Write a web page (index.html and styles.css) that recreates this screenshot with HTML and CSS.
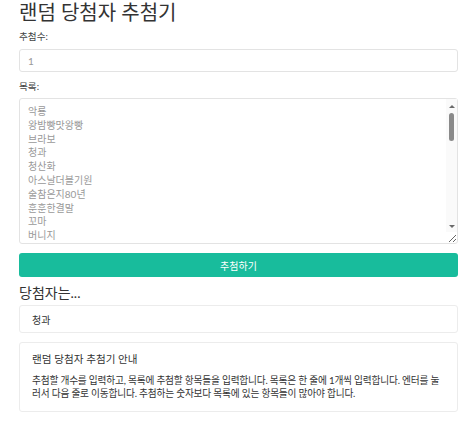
FILE: index.html
```html
<!DOCTYPE html>
<html lang="ko">
<head>
<meta charset="utf-8">
<link rel="stylesheet" href="styles.css">
</head>
<body>
<div class="page">
  <h1 class="title">랜덤 당첨자 추첨기</h1>
  <label class="label" for="count">추첨수:</label>
  <input class="field" id="count" type="text" placeholder="1">
  <label class="label label-list" for="list">목록:</label>
  <div class="area-wrap">
    <textarea class="field area" id="list">악룡
왕밤빵맛왕빵
브라보
청과
청산화
아스날더블기원
술참은지80년
훈훈한결말
꼬마
버니지
푸른
하늘
바다
노을
</textarea>
    <div class="scrollbar" aria-hidden="true">
      <span class="arrow arrow-up"></span>
      <span class="thumb"></span>
      <span class="arrow arrow-down"></span>
    </div>
  </div>
  <button class="btn" type="button">추첨하기</button>
  <h2 class="subtitle">당첨자는...</h2>
  <div class="result">청과</div>
  <div class="info">
    <h3 class="info-title">랜덤 당첨자 추첨기 안내</h3>
    <p class="info-text">추첨할 개수를 입력하고, 목록에 추첨할 항목들을 입력합니다. 목록은 한 줄에 1개씩 입력합니다. 엔터를 눌러서 다음 줄로 이동합니다. 추첨하는 숫자보다 목록에 있는 항목들이 많아야 합니다.</p>
  </div>
</div>
</body>
</html>
```
FILE: styles.css
```css
* { box-sizing: border-box; }
html, body { margin: 0; padding: 0; background: #fff; }
body {
  font-family: "Lato", "Noto Sans CJK KR", sans-serif;
  color: #2c3e50;
}
.page {
  padding: 0 16px 0 19px;
  display: flex;
  flex-direction: column;
}
.title {
  margin: 0;
  font-size: 20px;
  font-weight: 400;
  line-height: 24px;
  color: #333;
}
.label {
  margin-top: 6px;
  font-size: 9.6px;
  line-height: 14px;
  color: #444;
}
.label-list { margin-top: 8px; }
.field {
  margin-top: 5px;
  width: 100%;
  height: 23px;
  border: 1px solid #e3e3e3;
  border-radius: 3px;
  padding: 0 8px;
  font-family: "Lato", "Noto Sans CJK KR", sans-serif;
  font-size: 10px;
  color: #999;
  background: #fff;
  outline: none;
}
.field::placeholder { color: #999; }
.area-wrap {
  position: relative;
  margin-top: 4px;
}
.area {
  margin: 0;
  height: 146px;
  padding: 6px 8px 4px;
  line-height: 13.8px;
  resize: vertical;
  overflow: hidden;
  display: block;
}
.scrollbar {
  position: absolute;
  top: 1px;
  right: 1px;
  bottom: 12px;
  width: 11px;
  display: flex;
  flex-direction: column;
  align-items: center;
  background: #fafafa;
}
.arrow {
  width: 0;
  height: 0;
  border-left: 3px solid transparent;
  border-right: 3px solid transparent;
}
.arrow-up {
  margin-top: 6px;
  border-bottom: 3px solid #6a6a6a;
}
.arrow-down {
  margin-top: auto;
  margin-bottom: 4px;
  border-top: 3px solid #6a6a6a;
}
.thumb {
  margin-top: 5px;
  width: 5px;
  height: 28px;
  border-radius: 3px;
  background: #8a8a8a;
}
.btn {
  margin-top: 9px;
  height: 24px;
  border: 0;
  border-radius: 3px;
  background: #18bc9c;
  color: #fff;
  font-family: "Lato", "Noto Sans CJK KR", sans-serif;
  font-size: 10px;
}
.subtitle {
  margin: 6px 0 0;
  font-size: 14px;
  font-weight: 400;
  line-height: 20px;
  color: #333;
}
.result {
  margin-top: 2px;
  height: 28px;
  border: 1px solid #ececec;
  border-radius: 3px;
  padding: 0 12px;
  display: flex;
  align-items: center;
  font-size: 10px;
  color: #333;
}
.info {
  margin-top: 9px;
  border: 1px solid #ececec;
  border-radius: 3px;
  padding: 8px 12px 11px;
}
.info-title {
  margin: 0;
  font-size: 10.6px;
  font-weight: 400;
  line-height: 16px;
  color: #333;
}
.info-text {
  margin: 7px 0 0;
  font-size: 9.7px;
  letter-spacing: -0.2px;
  line-height: 13px;
  color: #333;
}
```
